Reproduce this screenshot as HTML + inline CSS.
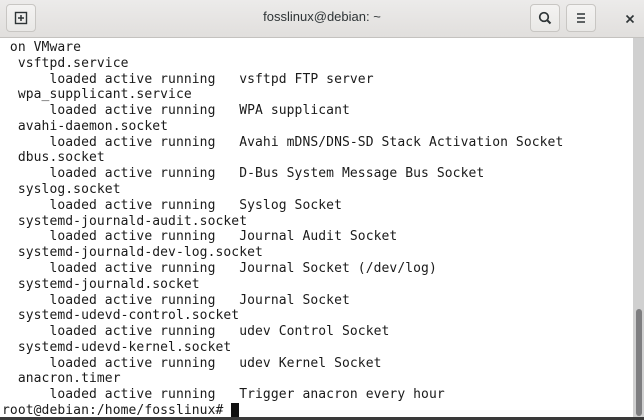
<!DOCTYPE html>
<html><head><style>
body{margin:0;width:644px;height:420px;overflow:hidden;background:#fff;position:relative;font-family:"Liberation Sans",sans-serif}
.hdr{position:absolute;left:0;top:0;width:644px;height:37px;background:linear-gradient(#ecebea,#e1dfdd);border-bottom:1px solid #c4c2bf}
.btn{position:absolute;top:4px;width:30px;height:28px;border:1px solid #c8c6c3;border-radius:4px;background:linear-gradient(#f4f3f2,#e9e8e6);box-sizing:border-box}
.title{position:absolute;top:9px;left:0;width:644px;text-align:center;font-size:13px;color:#2e3436}
pre{position:absolute;left:2px;top:40px;margin:0;font-family:"DejaVu Sans Mono","Liberation Mono",monospace;font-size:13px;line-height:15.78px;letter-spacing:0.08px;color:#1a1a1a}
.cur{display:inline-block;width:8px;height:14px;background:#111;vertical-align:-3px}
.track{position:absolute;left:633px;top:38px;width:11px;height:380px;background:#d0d0d0}
.thumb{position:absolute;left:636px;top:309px;width:6px;height:107px;border-radius:3px;background:#7e7e80}
.bot{position:absolute;left:0;top:417px;width:644px;height:3px;background:#3a3a3a}
</style></head><body>
<div class="hdr">
<div class="btn" style="left:6px"><svg width="28" height="26" viewBox="0 0 28 26"><rect x="8.5" y="7.5" width="11" height="11" fill="none" stroke="#2e3436" stroke-width="1.4"/><path d="M14 10v6M11 13h6" stroke="#2e3436" stroke-width="1.5"/></svg></div>
<div class="title">fosslinux@debian: ~</div>
<div class="btn" style="left:530px"><svg width="28" height="26" viewBox="0 0 28 26"><circle cx="13" cy="12" r="4.3" fill="none" stroke="#2e3436" stroke-width="1.7"/><path d="M16 15l3.5 3.5" stroke="#2e3436" stroke-width="2"/></svg></div>
<div class="btn" style="left:566px"><svg width="28" height="26" viewBox="0 0 28 26"><path d="M10 9h8M10 13h8M10 17h8" stroke="#2e3436" stroke-width="1.5"/></svg></div>
<svg style="position:absolute;left:624px;top:13px" width="12" height="12" viewBox="0 0 12 12"><path d="M2.5 2.5l7 7M9.5 2.5l-7 7" stroke="#2e3436" stroke-width="1.6"/></svg>
</div>
<pre> on VMware
  vsftpd.service
      loaded active running   vsftpd FTP server
  wpa_supplicant.service
      loaded active running   WPA supplicant
  avahi-daemon.socket
      loaded active running   Avahi mDNS/DNS-SD Stack Activation Socket
  dbus.socket
      loaded active running   D-Bus System Message Bus Socket
  syslog.socket
      loaded active running   Syslog Socket
  systemd-journald-audit.socket
      loaded active running   Journal Audit Socket
  systemd-journald-dev-log.socket
      loaded active running   Journal Socket (/dev/log)
  systemd-journald.socket
      loaded active running   Journal Socket
  systemd-udevd-control.socket
      loaded active running   udev Control Socket
  systemd-udevd-kernel.socket
      loaded active running   udev Kernel Socket
  anacron.timer
      loaded active running   Trigger anacron every hour
root@debian:/home/fosslinux# <span class="cur"></span></pre>
<div class="track"></div><div class="thumb"></div><div class="bot"></div>
</body></html>
